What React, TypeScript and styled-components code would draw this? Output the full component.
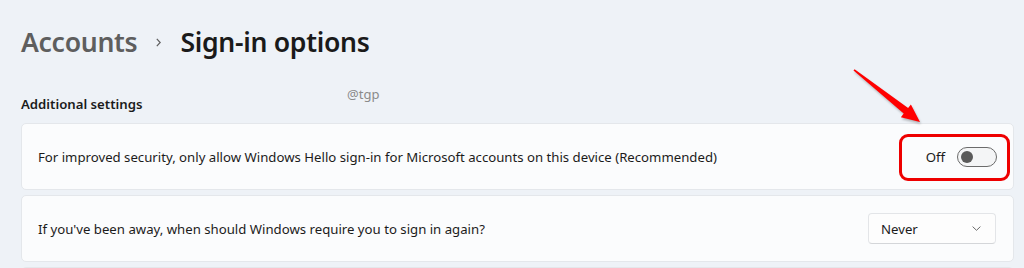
import { createGlobalStyle, styled } from "styled-components";

const Global = createGlobalStyle`
    html, body {
        margin: 0;
        padding: 0;
        background: #eef2f7;
    }
    body {
        font-family: "Noto Sans", "Segoe UI", sans-serif;
        color: #1b1b1b;
    }
`

const Page = styled.div`
    position: relative;
    height: 268px;
    overflow: hidden;
    padding: 20px 10px 0 21px;
    box-sizing: border-box;
`

const Breadcrumb = styled.div`
    display: flex;
    align-items: center;
    gap: 19px;
    height: 44px;
    font-size: 26.6px;
    font-weight: 600;
    letter-spacing: -0.3px;
`

const Crumb = styled.span<{ $current?: boolean }>`
    color: ${p => (p.$current ? "#1a1a1a" : "#5e5e5e")};
`

const SectionTitle = styled.div`
    margin-top: 30px;
    height: 20px;
    font-size: 13.2px;
    font-weight: 600;
    line-height: 20px;
`

const Watermark = styled.span`
    position: absolute;
    left: 347px;
    top: 85px;
    font-size: 13px;
    color: #8a8a8a;
`

const List = styled.div`
    display: flex;
    flex-direction: column;
    gap: 5px;
    margin-top: 9px;
`

const Card = styled.div`
    display: flex;
    align-items: center;
    justify-content: space-between;
    height: 67px;
    box-sizing: border-box;
    padding: 0 16px;
    background: #fbfcfd;
    border: 1px solid #e4e7eb;
    border-radius: 5px;
    font-size: 13.2px;
`

const Label = styled.span`
    color: #1b1b1b;
`

const ToggleGroup = styled.div`
    position: relative;
    display: flex;
    align-items: center;
    gap: 12px;

    &::after {
        content: "";
        position: absolute;
        left: -27px;
        right: -13px;
        top: -13px;
        bottom: -14px;
        border: 3px solid #ee0000;
        border-radius: 9px;
    }
`

const Switch = styled.div`
    display: flex;
    align-items: center;
    width: 40px;
    height: 20px;
    box-sizing: border-box;
    padding-left: 3px;
    border: 1px solid #6b6b6b;
    border-radius: 10px;
    background: #f4f5f6;
`

const Knob = styled.div`
    width: 12px;
    height: 12px;
    border-radius: 50%;
    background: #5a5a5a;
`

const Select = styled.div`
    display: flex;
    align-items: center;
    justify-content: space-between;
    width: 128px;
    height: 31px;
    box-sizing: border-box;
    padding: 0 14px 0 12px;
    background: #fdfdfd;
    border: 1px solid #e3e5e8;
    border-bottom-color: #d4d6d9;
    border-radius: 4px;
    margin-right: 1px;
`

const Arrow = styled.svg`
    position: absolute;
    left: 850px;
    top: 65px;
    filter: drop-shadow(1px 2px 1px rgba(0, 0, 0, 0.25));
`

export default function App() {
    return (
        <Page>
            <Global />
            <Breadcrumb>
                <Crumb>Accounts</Crumb>
                <svg width="5" height="9" viewBox="0 0 5 9">
                    <path d="M0.8 0.8 L4.2 4.5 L0.8 8.2" fill="none" stroke="#5e5e5e" strokeWidth="1.2" />
                </svg>
                <Crumb $current>Sign-in options</Crumb>
            </Breadcrumb>
            <SectionTitle>Additional settings</SectionTitle>
            <Watermark>@tgp</Watermark>
            <List>
                <Card>
                    <Label>For improved security, only allow Windows Hello sign-in for Microsoft accounts on this device (Recommended)</Label>
                    <ToggleGroup>
                        <span>Off</span>
                        <Switch>
                            <Knob />
                        </Switch>
                    </ToggleGroup>
                </Card>
                <Card>
                    <Label>If you&apos;ve been away, when should Windows require you to sign in again?</Label>
                    <Select>
                        <span>Never</span>
                        <svg width="9" height="5" viewBox="0 0 9 5">
                            <path d="M0.6 0.6 L4.5 4.3 L8.4 0.6" fill="none" stroke="#6a6a6a" strokeWidth="1" />
                        </svg>
                    </Select>
                </Card>
                <Card />
            </List>
            <Arrow width="76" height="62" viewBox="0 0 76 62">
                <polygon
                    points="4.6,4.2 58.1,43.1 60.9,39.6 70,57 50.9,52.2 53.7,48.6 3.5,5.6"
                    fill="#ff0000"
                />
            </Arrow>
        </Page>
    )
}
